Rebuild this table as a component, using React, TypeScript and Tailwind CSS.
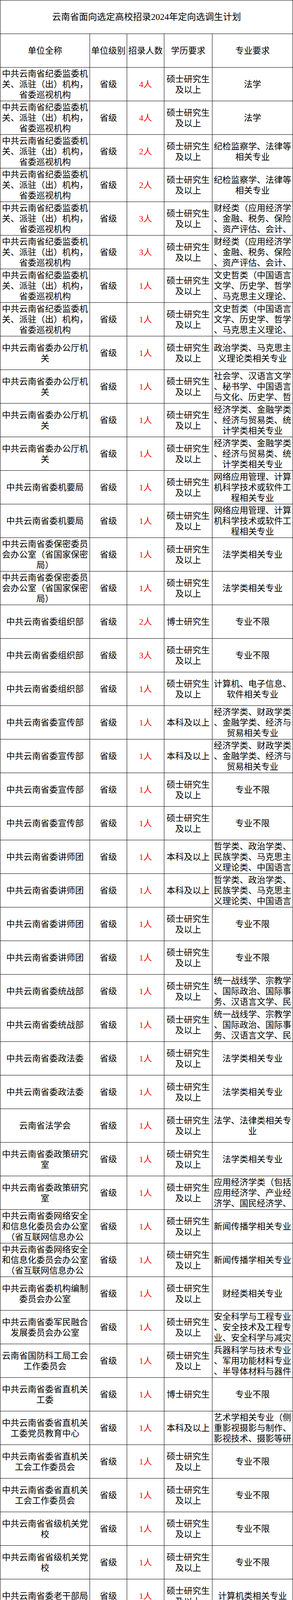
import React from 'react';

type Row = {
  unit: string[];
  count: string;
  edu: string[];
  major: string[];
};

// 单位名称（按原表换行）
const JW = ['中共云南省纪委监委机', '关、派驻（出）机构，', '省委巡视机构'];
const BGT = ['中共云南省委办公厅机', '关'];
const JYJ = ['中共云南省委机要局'];
const BM = ['中共云南省委保密委员', '会办公室（省国家保密', '局）'];
const ZZB = ['中共云南省委组织部'];
const XCB = ['中共云南省委宣传部'];
const JST = ['中共云南省委讲师团'];
const TZB = ['中共云南省委统战部'];
const ZFW = ['中共云南省委政法委'];
const FXH = ['云南省法学会'];
const ZYS = ['中共云南省委政策研究', '室'];
const WXB = ['中共云南省委网络安全', '和信息化委员会办公室', '（省互联网信息办公'];
const BB = ['中共云南省委机构编制', '委员会办公室'];
const JMRH = ['中共云南省委军民融合', '发展委员会办公室'];
const GFKG = ['云南省国防科工局工会', '工作委员会'];
const SZGW = ['中共云南省委省直机关', '工委'];
const DYJY = ['中共云南省委省直机关', '工委党员教育中心'];
const GH = ['中共云南省委省直机关', '工会工作委员会'];
const JGDX = ['中共云南省省级机关党', '校'];
const LGB = ['中共云南省委老干部局'];
const DSS = ['中共云南省委党史研究', '室'];
const DX = ['中共云南省委党校（云', '南行政学院）'];
const JDB = ['云南省接待办公室'];
const DAJ = ['云南省档案局'];
const RD = ['云南省人大常委会'];
const ZFB = ['云南省人民政府办公厅'];

const SS = ['硕士研究生', '及以上'];
const BS = ['博士研究生'];
const BK = ['本科及以上'];

const BX = ['专业不限'];
const FXL = ['法学类相关专业'];

const rows: Row[] = [
  { unit: JW, count: '4人', edu: SS, major: ['法学'] },
  { unit: JW, count: '4人', edu: SS, major: ['法学'] },
  { unit: JW, count: '2人', edu: SS, major: ['纪检监察学、法律等', '相关专业'] },
  { unit: JW, count: '2人', edu: SS, major: ['纪检监察学、法律等', '相关专业'] },
  { unit: JW, count: '3人', edu: SS, major: ['财经类（应用经济学', '、金融、税务、保险', '、资产评估、会计、'] },
  { unit: JW, count: '3人', edu: SS, major: ['财经类（应用经济学', '、金融、税务、保险', '、资产评估、会计、'] },
  { unit: JW, count: '1人', edu: SS, major: ['文史哲类（中国语言', '文学、历史学、哲学', '、马克思主义理论、'] },
  { unit: JW, count: '1人', edu: SS, major: ['文史哲类（中国语言', '文学、历史学、哲学', '、马克思主义理论、'] },
  { unit: BGT, count: '1人', edu: SS, major: ['政治学类、马克思主', '义理论类相关专业'] },
  { unit: BGT, count: '1人', edu: SS, major: ['社会学、汉语言文学', '、秘书学、中国语言', '与文化、历史学、哲'] },
  { unit: BGT, count: '1人', edu: SS, major: ['经济学类、金融学类', '、经济与贸易类、统', '计学类相关专业'] },
  { unit: BGT, count: '1人', edu: SS, major: ['经济学类、金融学类', '、经济与贸易类、统', '计学类相关专业'] },
  { unit: JYJ, count: '1人', edu: SS, major: ['网络应用管理、计算', '机科学技术或软件工', '程相关专业'] },
  { unit: JYJ, count: '1人', edu: SS, major: ['网络应用管理、计算', '机科学技术或软件工', '程相关专业'] },
  { unit: BM, count: '1人', edu: SS, major: FXL },
  { unit: BM, count: '1人', edu: SS, major: FXL },
  { unit: ZZB, count: '2人', edu: BS, major: BX },
  { unit: ZZB, count: '3人', edu: SS, major: BX },
  { unit: ZZB, count: '1人', edu: SS, major: ['计算机、电子信息、', '软件相关专业'] },
  { unit: XCB, count: '1人', edu: BK, major: ['经济学类、财政学类', '、金融学类、经济与', '贸易相关专业'] },
  { unit: XCB, count: '1人', edu: BK, major: ['经济学类、财政学类', '、金融学类、经济与', '贸易相关专业'] },
  { unit: XCB, count: '1人', edu: SS, major: BX },
  { unit: XCB, count: '1人', edu: SS, major: BX },
  { unit: JST, count: '1人', edu: BK, major: ['哲学类、政治学类、', '民族学类、马克思主', '义理论类、中国语言'] },
  { unit: JST, count: '1人', edu: BK, major: ['哲学类、政治学类、', '民族学类、马克思主', '义理论类、中国语言'] },
  { unit: JST, count: '1人', edu: SS, major: BX },
  { unit: JST, count: '1人', edu: SS, major: BX },
  { unit: TZB, count: '1人', edu: SS, major: ['统一战线学、宗教学', '、国际政治、国际事', '务、汉语言文学、民'] },
  { unit: TZB, count: '1人', edu: SS, major: ['统一战线学、宗教学', '、国际政治、国际事', '务、汉语言文学、民'] },
  { unit: ZFW, count: '1人', edu: SS, major: FXL },
  { unit: ZFW, count: '1人', edu: SS, major: FXL },
  { unit: FXH, count: '1人', edu: SS, major: ['法学、法律类相关专', '业'] },
  { unit: ZYS, count: '1人', edu: SS, major: FXL },
  { unit: ZYS, count: '1人', edu: SS, major: ['应用经济学类（包括', '应用经济学、产业经', '济学、国民经济学、'] },
  { unit: WXB, count: '1人', edu: SS, major: ['新闻传播学相关专业'] },
  { unit: WXB, count: '1人', edu: SS, major: ['新闻传播学相关专业'] },
  { unit: BB, count: '1人', edu: SS, major: ['财经类相关专业'] },
  { unit: JMRH, count: '1人', edu: SS, major: ['安全科学与工程专业', '、安全技术及工程专', '业、安全科学与减灾'] },
  { unit: GFKG, count: '1人', edu: SS, major: ['兵器科学与技术专业', '、军用功能材料专业', '、半导体材料与器件'] },
  { unit: SZGW, count: '1人', edu: BS, major: BX },
  { unit: DYJY, count: '1人', edu: BK, major: ['艺术学相关专业（侧', '重影视摄影与制作、', '影视技术、摄影等研'] },
  { unit: GH, count: '1人', edu: SS, major: BX },
  { unit: GH, count: '1人', edu: SS, major: BX },
  { unit: JGDX, count: '1人', edu: SS, major: BX },
  { unit: JGDX, count: '1人', edu: SS, major: BX },
  { unit: LGB, count: '1人', edu: SS, major: ['计算机类相关专业'] },
  { unit: LGB, count: '1人', edu: SS, major: ['计算机类相关专业'] },
  { unit: DSS, count: '1人', edu: SS, major: ['中国共产党党史、中', '国近现代史相关专业'] },
  { unit: DX, count: '1人', edu: SS, major: ['哲学类、文学类、历', '史学类相关专业'] },
  { unit: DX, count: '1人', edu: SS, major: ['哲学类、文学类、历', '史学类相关专业'] },
  { unit: DX, count: '1人', edu: SS, major: ['公共管理类相关专业'] },
  { unit: DX, count: '1人', edu: SS, major: ['公共管理类相关专业'] },
  { unit: DX, count: '1人', edu: SS, major: ['教育学类相关专业'] },
  { unit: DX, count: '1人', edu: SS, major: ['教育学类相关专业'] },
  { unit: JDB, count: '1人', edu: SS, major: ['汉语言文学、马克思', '主义哲学等相关专业'] },
  { unit: DAJ, count: '1人', edu: SS, major: ['中国语言文学、中国', '史相关专业'] },
  { unit: DAJ, count: '1人', edu: SS, major: ['中国语言文学、中国', '史相关专业'] },
  { unit: DAJ, count: '1人', edu: SS, major: ['图书情报与档案管理', '相关专业'] },
  { unit: DAJ, count: '1人', edu: SS, major: ['图书情报与档案管理', '相关专业'] },
  { unit: RD, count: '1人', edu: SS, major: ['法学、法律等相关专', '业'] },
  { unit: RD, count: '1人', edu: SS, major: ['法学、法律等相关专', '业'] },
  { unit: RD, count: '1人', edu: SS, major: ['政治学、社会学、民', '族学、马克思主义理', '论、社会工作等相关'] },
  { unit: RD, count: '1人', edu: SS, major: ['政治学、社会学、民', '族学、马克思主义理', '论、社会工作等相关'] },
  { unit: RD, count: '1人', edu: SS, major: ['理论经济学、应用经', '济学、金融、应用统', '计、税务、数字经济'] },
  { unit: RD, count: '1人', edu: SS, major: ['理论经济学、应用经', '济学、金融、应用统', '计、税务、数字经济'] },
  { unit: RD, count: '1人', edu: SS, major: ['管理科学与工程、公', '共管理学、信息资源', '管理等相关专业'] },
  { unit: ZFB, count: '1人', edu: SS, major: FXL },
  { unit: ZFB, count: '1人', edu: SS, major: ['医学类相关专业'] },
];

function Cell({ lines, red }: { lines: string[]; red?: boolean }) {
  return (
    <div
      className={`flex min-w-0 flex-col items-center justify-center border-b border-r border-black ${
        red ? 'text-[#ff0000]' : ''
      }`}
    >
      {lines.map((l, i) => (
        <div key={i} className="h-[27px] whitespace-nowrap leading-[27px]">
          {l}
        </div>
      ))}
    </div>
  );
}

export default function App() {
  return (
    <div className="grid w-[749px] grid-cols-[229px_95px_95px_123px_206px] auto-rows-[86px] border-l border-t border-black bg-white text-[22px] leading-[27px] text-black font-['Liberation_Serif','Noto_Sans_CJK_SC',serif]">
      <div className="col-span-5 flex items-center justify-center border-b border-r border-black text-[23px]">
        云南省面向选定高校招录2024年定向选调生计划
      </div>
      <Cell lines={['单位全称']} />
      <Cell lines={['单位级别']} />
      <Cell lines={['招录人数']} />
      <Cell lines={['学历要求']} />
      <Cell lines={['专业要求']} />
      {rows.map((r, i) => (
        <React.Fragment key={i}>
          <Cell lines={r.unit} />
          <Cell lines={['省级']} />
          <Cell lines={[r.count]} red />
          <Cell lines={r.edu} />
          <Cell lines={r.major} />
        </React.Fragment>
      ))}
    </div>
  );
}
